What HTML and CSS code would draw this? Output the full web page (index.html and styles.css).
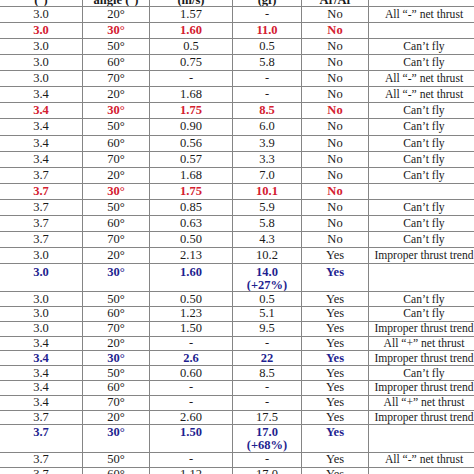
FILE: index.html
```html
<!DOCTYPE html>
<html>
<head>
<meta charset="utf-8">
<link rel="stylesheet" href="styles.css">
</head>
<body>
<div class="table">
  <div class="row head"><div class="c">(°)</div><div class="c">angle (°)</div><div class="c">(m/s)</div><div class="c">(gf)</div><div class="c">Ar/Af</div><div class="c"></div></div>
  <div class="row r16"><div class="c">3.0</div><div class="c">20°</div><div class="c">1.57</div><div class="c">-</div><div class="c">No</div><div class="c">All “-” net thrust</div></div>
  <div class="row r16 red"><div class="c">3.0</div><div class="c">30°</div><div class="c">1.60</div><div class="c">11.0</div><div class="c">No</div><div class="c"></div></div>
  <div class="row r16"><div class="c">3.0</div><div class="c">50°</div><div class="c">0.5</div><div class="c">0.5</div><div class="c">No</div><div class="c">Can’t fly</div></div>
  <div class="row r16"><div class="c">3.0</div><div class="c">60°</div><div class="c">0.75</div><div class="c">5.8</div><div class="c">No</div><div class="c">Can’t fly</div></div>
  <div class="row r16"><div class="c">3.0</div><div class="c">70°</div><div class="c">-</div><div class="c">-</div><div class="c">No</div><div class="c">All “-” net thrust</div></div>
  <div class="row r16"><div class="c">3.4</div><div class="c">20°</div><div class="c">1.68</div><div class="c">-</div><div class="c">No</div><div class="c">All “-” net thrust</div></div>
  <div class="row r16 red"><div class="c">3.4</div><div class="c">30°</div><div class="c">1.75</div><div class="c">8.5</div><div class="c">No</div><div class="c plain">Can’t fly</div></div>
  <div class="row r16"><div class="c">3.4</div><div class="c">50°</div><div class="c">0.90</div><div class="c">6.0</div><div class="c">No</div><div class="c">Can’t fly</div></div>
  <div class="row r16"><div class="c">3.4</div><div class="c">60°</div><div class="c">0.56</div><div class="c">3.9</div><div class="c">No</div><div class="c">Can’t fly</div></div>
  <div class="row r16"><div class="c">3.4</div><div class="c">70°</div><div class="c">0.57</div><div class="c">3.3</div><div class="c">No</div><div class="c">Can’t fly</div></div>
  <div class="row r16"><div class="c">3.7</div><div class="c">20°</div><div class="c">1.68</div><div class="c">7.0</div><div class="c">No</div><div class="c">Can’t fly</div></div>
  <div class="row r16 red"><div class="c">3.7</div><div class="c">30°</div><div class="c">1.75</div><div class="c">10.1</div><div class="c">No</div><div class="c"></div></div>
  <div class="row r16"><div class="c">3.7</div><div class="c">50°</div><div class="c">0.85</div><div class="c">5.9</div><div class="c">No</div><div class="c">Can’t fly</div></div>
  <div class="row r16"><div class="c">3.7</div><div class="c">60°</div><div class="c">0.63</div><div class="c">5.8</div><div class="c">No</div><div class="c">Can’t fly</div></div>
  <div class="row r16"><div class="c">3.7</div><div class="c">70°</div><div class="c">0.50</div><div class="c">4.3</div><div class="c">No</div><div class="c">Can’t fly</div></div>
  <div class="row r16"><div class="c">3.0</div><div class="c">20°</div><div class="c">2.13</div><div class="c">10.2</div><div class="c">Yes</div><div class="c">Improper thrust trend</div></div>
  <div class="row tall t28 blue"><div class="c">3.0</div><div class="c">30°</div><div class="c">1.60</div><div class="c two"><span>14.0</span><span>(+27%)</span></div><div class="c">Yes</div><div class="c"></div></div>
  <div class="row r15"><div class="c">3.0</div><div class="c">50°</div><div class="c">0.50</div><div class="c">0.5</div><div class="c">Yes</div><div class="c">Can’t fly</div></div>
  <div class="row r15"><div class="c">3.0</div><div class="c">60°</div><div class="c">1.23</div><div class="c">5.1</div><div class="c">Yes</div><div class="c">Can’t fly</div></div>
  <div class="row r15"><div class="c">3.0</div><div class="c">70°</div><div class="c">1.50</div><div class="c">9.5</div><div class="c">Yes</div><div class="c">Improper thrust trend</div></div>
  <div class="row r15"><div class="c">3.4</div><div class="c">20°</div><div class="c">-</div><div class="c">-</div><div class="c">Yes</div><div class="c">All “+” net thrust</div></div>
  <div class="row r15 blue"><div class="c">3.4</div><div class="c">30°</div><div class="c">2.6</div><div class="c">22</div><div class="c">Yes</div><div class="c plain">Improper thrust trend</div></div>
  <div class="row r15"><div class="c">3.4</div><div class="c">50°</div><div class="c">0.60</div><div class="c">8.5</div><div class="c">Yes</div><div class="c">Can’t fly</div></div>
  <div class="row r15"><div class="c">3.4</div><div class="c">60°</div><div class="c">-</div><div class="c">-</div><div class="c">Yes</div><div class="c">Improper thrust trend</div></div>
  <div class="row r15"><div class="c">3.4</div><div class="c">70°</div><div class="c">-</div><div class="c">-</div><div class="c">Yes</div><div class="c">All “+” net thrust</div></div>
  <div class="row r15"><div class="c">3.7</div><div class="c">20°</div><div class="c">2.60</div><div class="c">17.5</div><div class="c">Yes</div><div class="c">Improper thrust trend</div></div>
  <div class="row tall t26 blue"><div class="c">3.7</div><div class="c">30°</div><div class="c">1.50</div><div class="c two"><span>17.0</span><span>(+68%)</span></div><div class="c">Yes</div><div class="c"></div></div>
  <div class="row r15"><div class="c">3.7</div><div class="c">50°</div><div class="c">-</div><div class="c">-</div><div class="c">Yes</div><div class="c">All “-” net thrust</div></div>
  <div class="row r15"><div class="c">3.7</div><div class="c">60°</div><div class="c">1.12</div><div class="c">17.0</div><div class="c">Yes</div><div class="c"></div></div>
</div>
</body>
</html>
```
FILE: styles.css
```css
html, body {
  margin: 0;
  padding: 0;
  background: #ffffff;
  overflow: hidden;
  width: 474px;
  height: 474px;
}
.table {
  width: 479px;
  margin-top: -16px;
  font-family: "Liberation Serif", "Times New Roman", serif;
  font-size: 12.5px;
  line-height: 13px;
  color: #1a1a1a;
}
.row {
  display: grid;
  grid-template-columns: 83px 67px 83px 69px 67px 110px;
  box-sizing: border-box;
  border-bottom: 1.5px solid #858585;
}
.c {
  box-sizing: border-box;
  border-right: 1.5px solid #858585;
  display: flex;
  align-items: center;
  justify-content: center;
  white-space: nowrap;
  overflow: hidden;
}
.c:last-child {
  border-right: none;
  overflow: visible;
  font-size: 11.6px;
}
.head {
  height: 22.75px;
  font-weight: bold;
  line-height: 11px;
}
.head .c {
  align-items: flex-end;
}
.r16 { height: 16.1px; }
.r15 { height: 14.8px; }
.t28 { height: 28px; }
.t26 { height: 27.5px; }
.tall .c {
  align-items: flex-start;
  padding-top: 1.5px;
}
.t26 .c {
  padding-top: 0.5px;
}
.two {
  flex-direction: column;
  align-items: center !important;
  justify-content: flex-start;
}
.red {
  color: #d42030;
  font-weight: bold;
}
.blue {
  color: #1f1f90;
  font-weight: bold;
}
.plain {
  color: #1a1a1a;
  font-weight: normal;
}
```
